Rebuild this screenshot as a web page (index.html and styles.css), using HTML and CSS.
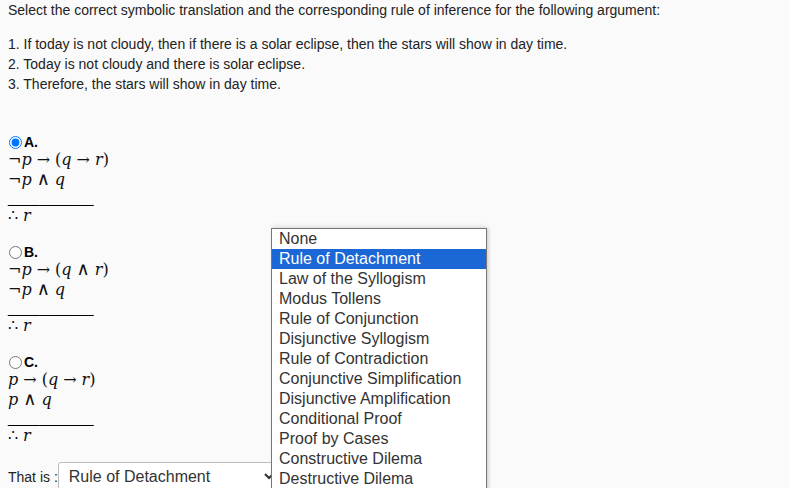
FILE: index.html
```html
<!DOCTYPE html>
<html lang="en">
<head>
    <meta charset="UTF-8">
    <meta name="viewport" content="width=device-width, initial-scale=1.0">
    <title>Rules of Inference</title>
    <link rel="stylesheet" href="styles.css">
</head>
<body>

    <div class="quiz">
        <p class="prompt">Select the correct symbolic translation and the corresponding rule of inference for the following argument:</p>

        <div class="premises">
            <div>1. If today is not cloudy, then if there is a solar eclipse, then the stars will show in day time.</div>
            <div>2. Today is not cloudy and there is solar eclipse.</div>
            <div>3. Therefore, the stars will show in day time.</div>
        </div>

        <!-- Choice A -->
        <div class="choice">
            <label class="choice-head"><input type="radio" name="answer" checked><b>A.</b></label>
            <div class="math">&not;<i>p</i><span class="rel">&rarr;</span>(<i>q</i><span class="rel">&rarr;</span><i>r</i>)</div>
            <div class="math">&not;<i>p</i><span class="bin">&and;</span><i>q</i></div>
            <div class="rule">___________</div>
            <div class="math"><span class="therefore">&there4;</span><i>r</i></div>
        </div>

        <!-- Choice B -->
        <div class="choice">
            <label class="choice-head"><input type="radio" name="answer"><b>B.</b></label>
            <div class="math">&not;<i>p</i><span class="rel">&rarr;</span>(<i>q</i><span class="bin">&and;</span><i>r</i>)</div>
            <div class="math">&not;<i>p</i><span class="bin">&and;</span><i>q</i></div>
            <div class="rule">___________</div>
            <div class="math"><span class="therefore">&there4;</span><i>r</i></div>
        </div>

        <!-- Choice C -->
        <div class="choice">
            <label class="choice-head"><input type="radio" name="answer"><b>C.</b></label>
            <div class="math"><i>p</i><span class="rel">&rarr;</span>(<i>q</i><span class="rel">&rarr;</span><i>r</i>)</div>
            <div class="math"><i>p</i><span class="bin">&and;</span><i>q</i></div>
            <div class="rule">___________</div>
            <div class="math"><span class="therefore">&there4;</span><i>r</i></div>
        </div>

        <div class="answer">
            That is :<select class="rule-select">
                <option>None</option>
                <option selected>Rule of Detachment</option>
                <option>Law of the Syllogism</option>
                <option>Modus Tollens</option>
                <option>Rule of Conjunction</option>
                <option>Disjunctive Syllogism</option>
                <option>Rule of Contradiction</option>
                <option>Conjunctive Simplification</option>
                <option>Disjunctive Amplification</option>
                <option>Conditional Proof</option>
                <option>Proof by Cases</option>
                <option>Constructive Dilema</option>
                <option>Destructive Dilema</option>
            </select>
        </div>

        <!-- Opened list of the select above -->
        <ul class="rule-list">
            <li>None</li>
            <li class="active">Rule of Detachment</li>
            <li>Law of the Syllogism</li>
            <li>Modus Tollens</li>
            <li>Rule of Conjunction</li>
            <li>Disjunctive Syllogism</li>
            <li>Rule of Contradiction</li>
            <li>Conjunctive Simplification</li>
            <li>Disjunctive Amplification</li>
            <li>Conditional Proof</li>
            <li>Proof by Cases</li>
            <li>Constructive Dilema</li>
            <li>Destructive Dilema</li>
        </ul>
    </div>

</body>
</html>
```

FILE: styles.css
```css
html, body {
    height: 100%;
    overflow: hidden;
}
body {
    font-family: 'Liberation Sans', Arial, sans-serif;
    font-size: 14px;
    line-height: 20px;
    color: #222;
    background-color: #fafafa;
    margin: 0;
}
.quiz {
    position: relative;
    padding: 0 8px;
}
.prompt {
    margin: 0;
}
.premises {
    margin-top: 14px;
}
.choice {
    margin-top: 18px;
}
.premises + .choice {
    margin-top: 40px;
}
.choice-head {
    display: flex;
    align-items: center;
    line-height: 16px;
    color: #000;
}
.choice-head input {
    width: 13px;
    height: 13px;
    margin: 0 2px 0 1px;
}
.math {
    font-family: 'DejaVu Serif', 'Liberation Serif', serif;
    font-size: 16px;
    line-height: 20px;
    color: #111;
}
.math i {
    font-style: italic;
}
.rel, .bin {
    font-style: normal;
    margin: 0 5px;
}
.bin {
    font-size: 18px;
    line-height: 16px;
}
.therefore {
    margin-right: 5px;
}
.rule {
    line-height: 16px;
    color: #000;
}
.answer {
    margin-top: 16px;
}
.rule-select {
    font-family: 'Liberation Sans', Arial, sans-serif;
    font-size: 16px;
    color: #333;
    width: 220px;
    height: 28px;
    padding: 0 6px;
    margin: 0;
    background-color: #fff;
    border: 1px solid #bbb;
    border-radius: 3px;
}
.rule-list {
    position: absolute;
    left: 271px;
    top: 228px;
    width: 214px;
    height: 270px;
    margin: 0;
    padding: 0;
    list-style: none;
    background-color: #fff;
    border: 1px solid #777;
    box-shadow: 2px 0 3px rgba(0, 0, 0, 0.15), 0 -4px 3px rgba(0, 0, 0, 0.04);
    font-size: 16px;
    line-height: 20px;
    color: #333;
}
.rule-list li {
    padding-left: 7px;
    white-space: nowrap;
}
.rule-list li.active {
    background-color: #1a67d5; /* highlighted option */
    color: #fff;
}
```
